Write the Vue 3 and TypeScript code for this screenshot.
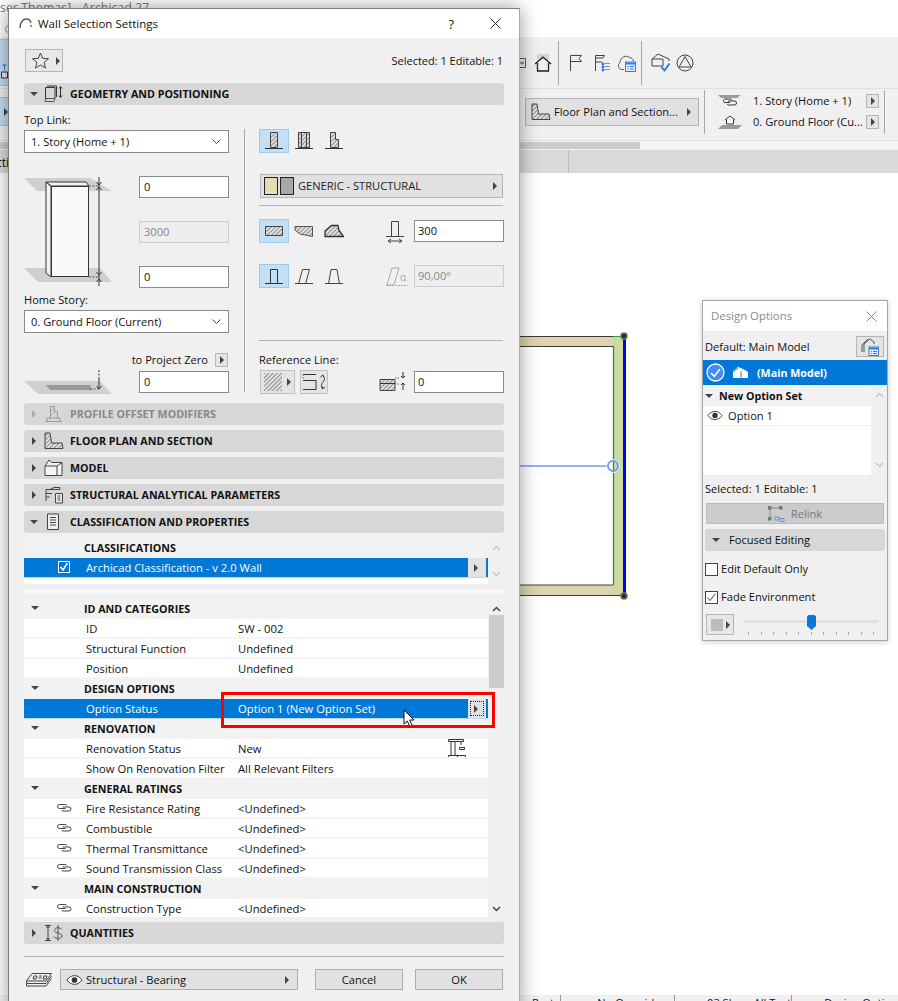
<script setup lang="ts">
interface Section {
  title: string
  icon: string
  open?: boolean
  disabled?: boolean
}

interface PropRow {
  kind: 'head' | 'row' | 'sel'
  name: string
  value?: string
  link?: boolean
}

const sections: Section[] = [
  { title: 'PROFILE OFFSET MODIFIERS', icon: 'i-profile', disabled: true },
  { title: 'FLOOR PLAN AND SECTION', icon: 'i-floor' },
  { title: 'MODEL', icon: 'i-model' },
  { title: 'STRUCTURAL ANALYTICAL PARAMETERS', icon: 'i-struct' },
  { title: 'CLASSIFICATION AND PROPERTIES', icon: 'i-class', open: true },
]

const U = '<Undefined>'
const props: PropRow[] = [
  { kind: 'head', name: 'ID AND CATEGORIES' },
  { kind: 'row', name: 'ID', value: 'SW - 002' },
  { kind: 'row', name: 'Structural Function', value: 'Undefined' },
  { kind: 'row', name: 'Position', value: 'Undefined' },
  { kind: 'head', name: 'DESIGN OPTIONS' },
  { kind: 'sel', name: 'Option Status', value: 'Option 1 (New Option Set)' },
  { kind: 'head', name: 'RENOVATION' },
  { kind: 'row', name: 'Renovation Status', value: 'New' },
  { kind: 'row', name: 'Show On Renovation Filter', value: 'All Relevant Filters' },
  { kind: 'head', name: 'GENERAL RATINGS' },
  { kind: 'row', name: 'Fire Resistance Rating', value: U, link: true },
  { kind: 'row', name: 'Combustible', value: U, link: true },
  { kind: 'row', name: 'Thermal Transmittance', value: U, link: true },
  { kind: 'row', name: 'Sound Transmission Class', value: U, link: true },
  { kind: 'head', name: 'MAIN CONSTRUCTION' },
  { kind: 'row', name: 'Construction Type', value: U, link: true },
]

const ticks = Array.from({ length: 11 }, (_, i) => i)
</script>

<template>
  <div class="desktop">
    <svg class="defs" width="0" height="0">
      <defs>
        <pattern id="hatch" width="3" height="3" patternUnits="userSpaceOnUse" patternTransform="rotate(45)">
          <rect width="3" height="3" fill="#dfe1e3" />
          <line x1="0" y1="0" x2="0" y2="3" stroke="#5f5f5f" stroke-width="1.300" />
        </pattern>
        <symbol id="i-link" viewBox="0 0 15 8">
          <path d="M8.500 4.500H2.500a2 2 0 0 1 0-4h6a2 2 0 0 1 1.500 1" fill="none" stroke="#444" />
          <path d="M5.500 3h6.500a2 2 0 0 1 0 4H6a2 2 0 0 1-1.500-1" fill="none" stroke="#444" />
        </symbol>
        <symbol id="i-eye" viewBox="0 0 18 12">
          <path d="M1 6c2.200-3 5-4.600 8-4.600S14.800 3 17 6c-2.200 3-5 4.600-8 4.600S3.200 9 1 6z" fill="#fff" stroke="#333" />
          <circle cx="9" cy="6" r="3" fill="#333" />
        </symbol>
        <symbol id="i-geom" viewBox="0 0 20 18">
          <path d="M1.500 2.500h9.500v11H1.500zM3 1h9.500v11" fill="none" stroke="#333" />
          <path d="M1 15.500l2-2h8l-1 3H1z" fill="none" stroke="#555" />
          <path d="M16.500 2v10M15 3.500l1.500-2 1.500 2M15 10.500l1.500 2 1.500-2" fill="none" stroke="#333" />
        </symbol>
        <symbol id="i-profile" viewBox="0 0 20 18">
          <path d="M6.500 14V1.500h4V7h3v7M1 16.500h17M3 16.500V13h13v3.500" fill="none" stroke="#999" />
          <path d="M7 2h3v11H7z" fill="url(#hatch)" opacity=".5" />
        </symbol>
        <symbol id="i-floor" viewBox="0 0 20 18">
          <path d="M1 1h5l1.500 10H18l1 5.500H1z" fill="url(#hatch)" stroke="#444" />
        </symbol>
        <symbol id="i-model" viewBox="0 0 20 18">
          <path d="M1 7v9.500h17V3.500H7.500L5 1 1 7h12l5-3.500M13 7v9.500" fill="#f4f4f4" stroke="#444" />
        </symbol>
        <symbol id="i-struct" viewBox="0 0 20 18">
          <path d="M2 15V3.500h14V1.500M2 7.500h6M6 3.500l4-2h6M2 11h4" fill="none" stroke="#444" />
          <path d="M11.500 7.500h7v9.500h-7z" fill="#e8e8e8" stroke="#444" />
          <path d="M13.500 10h3M13.500 12h3M13.500 14h3" stroke="#555" />
        </symbol>
        <symbol id="i-class" viewBox="0 0 20 18">
          <path d="M3.500 1h11v15.500h-11z" fill="#eee" stroke="#444" />
          <path d="M6 4.500h6M6 7h6M6 9.500h6M6 12h6" stroke="#444" />
        </symbol>
        <symbol id="i-money" viewBox="0 0 20 18">
          <path d="M1 1.500h6M1 16.500h6M4 2v14M2.500 4L4 2l1.500 2M2.500 14L4 16l1.500-2" fill="none" stroke="#444" />
          <path d="M17.500 5.500c-1-2.500-7-2.500-7 .8 0 3.700 7.500 2 7.500 5.700 0 3.200-7 3.200-8 .5M14 1v16" fill="none" stroke="#555" />
        </symbol>
      </defs>
    </svg>

    <div class="app-title">
      <span>ser Thomas] - Archicad 27</span>
      <svg class="app-arc" width="3" height="8" viewBox="0 0 3 8"><path d="M3 .5C1 1 .5 3 .5 4S1 7 3 7.500" fill="none" stroke="#999" /></svg>
    </div>

    <div class="tb-row tb-first">
      <div class="sliver sliver-tall">
        <svg width="8" height="16" viewBox="0 0 8 16">
          <path d="M4.500 7V1M2.500 3l2-2 2 2" fill="none" stroke="#2f7fe8" />
          <path d="M1.500 9h6v6h-6z" fill="#dbe8f4" stroke="#333" />
        </svg>
      </div>
      <div class="tb-group tb-group-first">
        <svg class="part" width="6" height="10" viewBox="0 0 6 10"><path d="M0 .5h5.500v9H0M0 5h3.500M2 3.500l1.500 1.500L2 6.500" fill="none" stroke="#555" /></svg>
        <span class="home">
          <svg width="18" height="17" viewBox="0 0 18 17"><path d="M1 9l8-7 8 7M3.500 8v8h11V8" fill="none" stroke="#222" stroke-width="1.300" /></svg>
        </span>
        <span class="tb-div"></span>
        <svg class="ti t-flag" width="14" height="18" viewBox="0 0 14 18"><path d="M1.500 17V1.500h11l-2.500 3 2.500 3h-11" fill="none" stroke="#444" /></svg>
        <svg class="ti t-list" width="17" height="18" viewBox="0 0 17 18">
          <path d="M1.500 17V1.500h9L9 4H2M2 8h6" fill="none" stroke="#444" />
          <path d="M8 9h2v2H8zM8 12h2v2H8zM8 15h2v2H8zM11 9.500h5M11 12.500h5M11 15.500h5" fill="#2f7fe8" stroke="#2f7fe8" stroke-width=".8" />
        </svg>
        <svg class="ti t-cloud" width="19" height="20" viewBox="0 0 19 20">
          <path d="M7 16.500H4.500C1 16 .5 11 3 9.500 3.500 4 9 1.500 12.500 4.500c2 .2 3.500 1.500 4 3.500" fill="none" stroke="#555" />
          <rect x="8.500" y="9" width="10" height="9.500" fill="#e8f0fb" stroke="#2f7fe8" />
          <path d="M8.500 10.500h10" stroke="#2f7fe8" stroke-width="2" />
          <path d="M10.500 13.500h1.500M13 13.500h4M10.500 16h1.500M13 16h4" stroke="#2f7fe8" />
        </svg>
        <span class="tb-div tb-div-2"></span>
        <svg class="ti t-house" width="19" height="20" viewBox="0 0 19 20">
          <path d="M1 13V6l6-5 11 5v2M1 6h11v7H1" fill="none" stroke="#444" />
          <path d="M10.500 14l3 3.500 5-7" fill="none" stroke="#2f7fe8" stroke-width="2" />
        </svg>
        <svg width="18" height="18" viewBox="0 0 18 18">
          <circle cx="9" cy="9" r="8" fill="none" stroke="#444" />
          <path d="M9 2.500L15 13H3z" fill="none" stroke="#444" />
        </svg>
      </div>
    </div>

    <div class="tb-row tb-second">
      <div class="sliver sliver-short"><i class="tri-r"></i></div>
      <div class="fp-btn">
        <svg width="20" height="18" viewBox="0 0 20 18"><use href="#i-floor" /></svg>
        <span>Floor Plan and Section...</span>
        <i class="tri-r"></i>
      </div>
      <span class="tb-div tb-div-3"></span>
      <div class="story">
        <div class="story-row">
          <svg width="24" height="12" viewBox="0 0 24 12">
            <path d="M0 0h23l-4 3H3z" fill="#9a9a9a" />
            <path d="M12 7.500H6.500a2 2 0 0 1 0-3.500h6a2 2 0 0 1 1.500 1" fill="none" stroke="#333" />
            <path d="M10 6h6.500a2 2 0 0 1 0 4h-6a2 2 0 0 1-1.500-1" fill="none" stroke="#333" />
          </svg>
          <span class="story-text">1. Story (Home + 1)</span>
          <span class="mini"><i class="tri-r"></i></span>
        </div>
        <div class="story-row">
          <svg width="24" height="14" viewBox="0 0 24 14">
            <path d="M0 14l4-4h20l-4 4z" fill="#9a9a9a" />
            <path d="M7 5l5-4 5 4M8.500 4.500V9h7V4.500" fill="#fff" stroke="#333" />
          </svg>
          <span class="story-text">0. Ground Floor (Cu...</span>
          <span class="mini"><i class="tri-r"></i></span>
        </div>
      </div>
      <span class="tb-div tb-div-4"></span>
    </div>

    <div class="scroll-strip"><span class="scroll-thumb"></span></div>
    <div class="tabs">
      <span class="tab-clip">cti</span>
      <span class="tab-div"></span>
    </div>

    <div class="canvas">
      <svg class="plan" width="898" height="822" viewBox="0 173 898 822">
        <rect x="500" y="336" width="113" height="11" fill="#dcd4b0" />
        <rect x="500" y="585" width="113" height="11" fill="#dcd4b0" />
        <rect x="613" y="336" width="10" height="260" fill="#ccd9a2" />
        <path d="M500 346.500h113M500 585h113M500 595.500h123" stroke="#3c3c30" fill="none" />
        <path d="M500 336.500h113" stroke="#3c3c30" />
        <path d="M613 336.500h10" stroke="#31a531" />
        <path d="M613.500 346v239" stroke="#0f9a0f" stroke-width="1.200" />
        <path d="M500 466h108" stroke="#fff" stroke-width="3" opacity=".7" />
        <path d="M500 466h108" stroke="#6f9cf2" stroke-width="1.500" />
        <circle cx="613" cy="466" r="6.500" fill="none" stroke="#fff" stroke-width="1" opacity=".8" />
        <circle cx="613" cy="466" r="5" fill="none" stroke="#6f9cf2" stroke-width="2" />
        <path d="M624.500 336v260" stroke="#0000ee" stroke-width="3" />
        <circle cx="624" cy="336" r="3" fill="#1c1ca0" stroke="#7d7d12" stroke-width="1.500" />
        <circle cx="624" cy="596" r="3" fill="#1c1ca0" stroke="#7d7d12" stroke-width="1.500" />
      </svg>
    </div>

    <div class="statusbar">
      <span class="st-text st-a">Paste</span>
      <span class="st-div"></span>
      <span class="st-text st-b">No Overrides</span>
      <span class="st-div"></span>
      <span class="st-text st-c">03 Show All Text</span>
      <span class="st-div"></span>
      <span class="st-text st-d">Design Option</span>
    </div>

    <!-- main dialog -->
    <section class="dialog">
      <header class="titlebar">
        <svg class="arc" width="13" height="13" viewBox="0 0 13 13"><path d="M1 11C1 5 4 2 7.500 2c2.500 0 4 1.500 4.500 4M12 8v2" fill="none" stroke="#555" stroke-width="1.300" /></svg>
        <span class="title-text">Wall Selection Settings</span>
        <span class="help">?</span>
        <svg class="close" width="11" height="11" viewBox="0 0 11 11"><path d="M.5.500l10 10M10.500.500l-10 10" stroke="#222" /></svg>
      </header>

      <div class="dlg-body">
        <div class="fav-row">
          <div class="fav-btn">
            <svg width="17" height="17" viewBox="0 0 17 17"><path d="M8.500 1l2.200 5.300 5.800.4-4.400 3.700 1.400 5.600-5-3-5 3 1.400-5.600L.5 6.700l5.800-.4z" fill="none" stroke="#444" /></svg>
            <i class="tri-r"></i>
          </div>
          <span class="sel-count">Selected: 1 Editable: 1</span>
        </div>

        <div class="sec-head first">
          <i class="tri-d"></i>
          <svg class="sec-icon" width="20" height="18"><use href="#i-geom" /></svg>
          <span>GEOMETRY AND POSITIONING</span>
        </div>

        <div class="geo">
          <div class="geo-left">
            <label class="lbl">Top Link:</label>
            <div class="select">
              <span>1. Story (Home + 1)</span>
              <svg width="9" height="5" viewBox="0 0 9 5"><path d="M.5.500l4 4 4-4" fill="none" stroke="#444" /></svg>
            </div>
            <div class="wall-row">
              <svg width="90" height="112" viewBox="0 0 90 112">
                <path d="M0 2h66l22 13H13zM0 92h76l12 14H14z" fill="#cfcfcf" />
                <path d="M22 6h40l3 4H27zM22 6v91l5 4V10z" fill="#f2f4f4" stroke="#333" />
                <path d="M27.500 10.500h37v90h-37z" fill="#f9f9f9" stroke="#333" />
                <path d="M75 1v109" stroke="#333" />
                <path d="M65 10h10M65 101h10" stroke="#555" stroke-dasharray="2 1.500" />
                <path d="M72.500 6l2.500 3 2.500-3M72.500 14l2.500-3 2.500 3M72.500 96l2.500 3 2.500-3M72.500 106l2.500-3 2.500 3" fill="none" stroke="#333" />
              </svg>
              <div class="wall-inputs">
                <div class="field">0</div>
                <div class="field off">3000</div>
                <div class="field">0</div>
              </div>
            </div>
            <label class="lbl home-lbl">Home Story:</label>
            <div class="select">
              <span>0. Ground Floor (Current)</span>
              <svg width="9" height="5" viewBox="0 0 9 5"><path d="M.5.500l4 4 4-4" fill="none" stroke="#444" /></svg>
            </div>
            <div class="zero-row">
              <svg width="90" height="26" viewBox="0 0 90 26">
                <path d="M0 12h76l12 13H14z" fill="#cfcfcf" />
                <path d="M22 16h44l2 5H26z" fill="#999" />
                <path d="M75 1v8" stroke="#333" stroke-dasharray="2 1.500" />
                <path d="M75 9v11M72.500 17l2.500 3 2.500-3" fill="none" stroke="#333" />
                <path d="M66 20h9" stroke="#555" stroke-dasharray="2 1.500" />
              </svg>
              <div class="zero-col">
                <div class="zero-lbl">
                  <span>to Project Zero</span>
                  <span class="mini"><i class="tri-r"></i></span>
                </div>
                <div class="field">0</div>
              </div>
            </div>
          </div>

          <div class="geo-div"></div>

          <div class="geo-right">
            <div class="icon-row top">
              <span class="ibtn on">
                <svg width="20" height="20" viewBox="0 0 20 20"><path d="M6.500 1.500h7v15h-7z" fill="url(#hatch)" stroke="#444" /><path d="M1 17.500h18" stroke="#333" /></svg>
              </span>
              <span class="ibtn">
                <svg width="20" height="20" viewBox="0 0 20 20"><path d="M4.500 1.500h11v15h-11zM7.500 1.500h5v15h-5z" fill="url(#hatch)" stroke="#444" /><path d="M1 17.500h18" stroke="#333" /></svg>
              </span>
              <span class="ibtn">
                <svg width="20" height="20" viewBox="0 0 20 20"><path d="M6.500 16.500V1.500h5v7h3v8z" fill="url(#hatch)" stroke="#444" /><path d="M1 17.500h18" stroke="#333" /></svg>
              </span>
            </div>

            <div class="material">
              <span class="swatch dots"></span>
              <span class="swatch grey"></span>
              <span class="mat-name">GENERIC - STRUCTURAL</span>
              <i class="tri-r"></i>
            </div>
            <div class="rule rule-a"></div>

            <div class="icon-row second">
              <span class="ibtn on">
                <svg width="20" height="12" viewBox="0 0 20 12"><path d="M1.500 1.500h17v9h-17z" fill="url(#hatch)" stroke="#444" /></svg>
              </span>
              <span class="ibtn">
                <svg width="20" height="12" viewBox="0 0 20 12"><path d="M1 1.500h17.500v10L6 9 1 5z" fill="url(#hatch)" stroke="#555" /></svg>
              </span>
              <span class="ibtn">
                <svg width="20" height="14" viewBox="0 0 20 14"><path d="M1 12.500V7l6.500-5.500H14l1 5 4.500 6z" fill="url(#hatch)" stroke="#333" stroke-width="1.300" /></svg>
              </span>
              <div class="dim-group">
                <svg width="20" height="24" viewBox="0 0 20 24"><path d="M6.500 17V2.500h7V17M1 17.500h18M3 22h14M3 22l3-2M3 22l3 2M17 22l-3-2M17 22l-3 2" fill="none" stroke="#444" /></svg>
                <div class="field short">300</div>
              </div>
            </div>

            <div class="icon-row third">
              <span class="ibtn on">
                <svg width="20" height="20" viewBox="0 0 20 20"><path d="M6.500 18V3.500h7V18M1 17.500h18" fill="none" stroke="#333" /></svg>
              </span>
              <span class="ibtn">
                <svg width="20" height="20" viewBox="0 0 20 20"><path d="M4.500 18L8.500 3.500h7L11.500 18M1 17.500h18" fill="none" stroke="#444" /></svg>
              </span>
              <span class="ibtn">
                <svg width="20" height="20" viewBox="0 0 20 20"><path d="M4.500 18L7 3.500h6L15.500 18M1 17.500h18" fill="none" stroke="#444" /></svg>
              </span>
              <div class="dim-group">
                <svg width="24" height="22" viewBox="0 0 24 22">
                  <path d="M2 20l5-17h7l-5 17z" fill="none" stroke="#aaa" />
                  <path d="M1 20.500h22" stroke="#aaa" stroke-dasharray="2 1" />
                  <text x="15" y="16" class="alpha">α</text>
                </svg>
                <div class="field short off">90,00°</div>
              </div>
            </div>

            <div class="rule rule-b"></div>
            <label class="lbl ref-lbl">Reference Line:</label>
            <div class="ref-row">
              <span class="ref-btn wide">
                <svg width="18" height="18" viewBox="0 0 18 18"><rect width="18" height="18" fill="url(#hatch)" /></svg>
                <i class="tri-r"></i>
              </span>
              <span class="ref-btn narrow">
                <svg width="24" height="18" viewBox="0 0 24 18">
                  <path d="M1 1.500h13M1 16.500h13M1 7.500h13v9" fill="none" stroke="#333" />
                  <path d="M1 1.500v4" stroke="#777" stroke-dasharray="1.500 1" />
                  <path d="M21 3c2 2 2 4 0 6M21 15c-2-2-2-4 0-6M18.500 4l2.500-2 1 2.500M23 14l-2.500 2-1-2.500" fill="none" stroke="#333" />
                </svg>
              </span>
              <div class="dim-group">
                <svg width="28" height="20" viewBox="0 0 28 20">
                  <path d="M1 7.500h15v11H1z" fill="url(#hatch)" stroke="#444" />
                  <path d="M1 11.500h15" stroke="#333" />
                  <path d="M16 6h5M16 12h5" stroke="#777" stroke-dasharray="1.500 1" />
                  <path d="M24 0v6M22 4l2 2 2-2M24 11v7M22 13l2-2 2 2" fill="none" stroke="#333" />
                </svg>
                <div class="field short">0</div>
              </div>
            </div>
          </div>
        </div>

        <div v-for="s in sections" :key="s.title" class="sec-head" :class="{ dis: s.disabled }">
          <i :class="s.open ? 'tri-d' : 'tri-r'"></i>
          <svg class="sec-icon" width="20" height="18"><use :href="'#' + s.icon" /></svg>
          <span>{{ s.title }}</span>
        </div>

        <div class="class-list">
          <div class="class-rows">
            <div class="prop head"><span class="hd-name">CLASSIFICATIONS</span></div>
            <div class="prop sel">
              <span class="chk"><svg width="10" height="10" viewBox="0 0 10 10"><path d="M1.500 5l2.500 3L8.500 1" fill="none" stroke="#fff" stroke-width="1.500" /></svg></span>
              <span class="p-name">Archicad Classification - v 2.0 Wall</span>
              <span class="sel-btn"><i class="tri-r"></i></span>
            </div>
          </div>
          <div class="vscroll faint">
            <svg width="9" height="6" viewBox="0 0 9 6"><path d="M1 5l3.500-3.500L8 5" fill="none" stroke="#c8c8c8" stroke-width="1.500" /></svg>
            <svg width="9" height="6" viewBox="0 0 9 6"><path d="M1 1l3.500 3.500L8 1" fill="none" stroke="#c8c8c8" stroke-width="1.500" /></svg>
          </div>
        </div>
        <div class="strip"></div>

        <div class="prop-list">
          <div class="prop-rows">
            <div v-for="p in props" :key="p.name" class="prop" :class="p.kind">
              <template v-if="p.kind === 'head'">
                <i class="tri-d tri-prop"></i>
                <span class="hd-name">{{ p.name }}</span>
              </template>
              <template v-else>
                <svg v-if="p.link" class="link" width="15" height="8"><use href="#i-link" /></svg>
                <span class="p-name">{{ p.name }}</span>
                <span class="p-val">{{ p.value }}</span>
                <span v-if="p.kind === 'sel'" class="sel-btn dotted"><i class="tri-r"></i></span>
                <svg v-if="p.name === 'Renovation Status'" class="reno" width="19" height="19" viewBox="0 0 19 19">
                  <path d="M.5.500h15v2H.5zM13 2.500V6M11.500 8.500h5v2h-5zM9.500 16.500h8v2h-8zM.5 16.500h9v2h-9zM3 2.500v14M7 2.500v14" fill="none" stroke="#333" />
                </svg>
              </template>
            </div>
          </div>
          <div class="vscroll">
            <svg class="up" width="9" height="6" viewBox="0 0 9 6"><path d="M1 5l3.500-3.500L8 5" fill="none" stroke="#444" stroke-width="1.500" /></svg>
            <span class="thumb"></span>
            <svg class="down" width="9" height="6" viewBox="0 0 9 6"><path d="M1 1l3.500 3.500L8 1" fill="none" stroke="#444" stroke-width="1.500" /></svg>
          </div>
        </div>

        <div class="sec-head quant">
          <i class="tri-r"></i>
          <svg class="sec-icon" width="20" height="18"><use href="#i-money" /></svg>
          <span>QUANTITIES</span>
        </div>
        <div class="rule rule-foot"></div>

        <footer class="footer">
          <svg class="layers" width="26" height="16" viewBox="0 0 26 16">
            <path d="M.5 9L6 1.500h19.500L20 9z" fill="#eee" stroke="#444" />
            <path d="M.5 9v2.500h19.500l5.500-7.500M.5 11.500V14h19.500l5.500-7.500" fill="none" stroke="#444" />
            <path d="M8 4h3l-1 3H7zM13 4h3M12.500 6h3M18 4h3l-1 3h-3z" fill="none" stroke="#444" />
          </svg>
          <div class="btn layer-sel">
            <svg width="17" height="12"><use href="#i-eye" /></svg>
            <span>Structural - Bearing</span>
            <i class="tri-r"></i>
          </div>
          <div class="btn cancel">Cancel</div>
          <div class="btn ok">OK</div>
        </footer>
      </div>
    </section>

    <!-- highlight put on the shot -->
    <div class="red-box"></div>
    <svg class="cursor" width="13" height="19" viewBox="0 0 13 19">
      <path d="M1 1v14l3.300-3 2.500 5.500 2.400-1-2.500-5.500H11z" fill="#fff" stroke="#111" />
    </svg>

    <!-- palette -->
    <section class="palette">
      <header class="pal-title">
        <span>Design Options</span>
        <svg width="11" height="11" viewBox="0 0 11 11"><path d="M.5.500l10 10M10.500.500l-10 10" stroke="#888" /></svg>
      </header>
      <div class="pal-default">
        <span>Default: Main Model</span>
        <span class="pal-btn">
          <svg width="18" height="19" viewBox="0 0 18 19">
            <path d="M3 15V7l6-5 4 3v2M1 15V8l6-6" fill="none" stroke="#555" />
            <rect x="8" y="10" width="9.500" height="8.500" fill="#e8f0fb" stroke="#2f7fe8" />
            <path d="M8 11.500h9.500" stroke="#2f7fe8" stroke-width="2" />
            <path d="M10 14.500h1M12 14.500h4M10 16.500h1M12 16.500h4" stroke="#2f7fe8" />
          </svg>
        </span>
      </div>
      <div class="pal-main">
        <svg width="19" height="19" viewBox="0 0 19 19">
          <circle cx="9.500" cy="9.500" r="8.500" fill="#3f8ef5" stroke="#fff" stroke-width="1.300" />
          <path d="M5 10l3.300 3.300L14 6" fill="none" stroke="#fff" stroke-width="1.500" />
        </svg>
        <svg class="pal-house" width="15" height="11" viewBox="0 0 15 11">
          <path d="M.5 10.500V4L5 .5 9 2l5.500 3v5.500zM8 4v6.500" fill="#fff" stroke="#fff" />
          <path d="M8 4.500v6M.5 4.500L5 1" stroke="#0078d7" />
        </svg>
        <span>(Main Model)</span>
      </div>
      <div class="pal-list">
        <div class="pal-rows">
          <div class="pal-head"><i class="tri-d"></i><span>New Option Set</span></div>
          <div class="pal-opt">
            <svg width="16" height="11"><use href="#i-eye" /></svg>
            <span>Option 1</span>
          </div>
        </div>
        <div class="vscroll faint pal-scroll">
          <svg width="9" height="6" viewBox="0 0 9 6"><path d="M1 5l3.500-3.500L8 5" fill="none" stroke="#c8c8c8" stroke-width="1.500" /></svg>
          <svg width="9" height="6" viewBox="0 0 9 6"><path d="M1 1l3.500 3.500L8 1" fill="none" stroke="#c8c8c8" stroke-width="1.500" /></svg>
        </div>
      </div>
      <div class="pal-count">Selected: 1 Editable: 1</div>
      <div class="relink">
        <svg width="17" height="16" viewBox="0 0 17 16">
          <path d="M2 2h11M2 2v11" stroke="#888" fill="none" />
          <rect x="0" y="0" width="3.500" height="3.500" fill="#777" />
          <rect x="11" y="0" width="3.500" height="3.500" fill="#777" />
          <rect x="0" y="11" width="3.500" height="3.500" fill="#777" />
          <path d="M7 11h4v3H7zM11 12.500h5v3h-4z" fill="none" stroke="#6f93c9" />
        </svg>
        <span>Relink</span>
      </div>
      <div class="pal-section"><i class="tri-d"></i><span>Focused Editing</span></div>
      <div class="pal-check first-check"><span class="box"></span><span>Edit Default Only</span></div>
      <div class="pal-check"><span class="box"><svg width="11" height="11" viewBox="0 0 11 11"><path d="M1.500 5.500l2.500 3L9.500 1.500" fill="none" stroke="#444" /></svg></span><span>Fade Environment</span></div>
      <div class="pal-slider">
        <span class="fade-btn"><span class="fade-sq"></span><i class="tri-r"></i></span>
        <div class="slider">
          <div class="track"></div>
          <svg class="knob" width="9" height="15" viewBox="0 0 9 15"><path d="M0 1.500L1.500 0h6L9 1.500V11l-4.500 4L0 11z" fill="#0a78d6" /></svg>
          <div class="ticks"><span v-for="t in ticks" :key="t" class="tick"></span></div>
        </div>
      </div>
    </section>
  </div>
</template>

<style scoped>
.desktop {
  position: relative;
  display: flex;
  flex-direction: column;
  width: 898px;
  height: 1001px;
  overflow: hidden;
  background: #fff;
  color: #111;
  font: 11.1px/14px "Open Sans", "Liberation Sans", sans-serif;
}
.defs {
  position: absolute;
}
svg {
  display: block;
  flex: none;
}
.tri-r,
.tri-d {
  display: inline-block;
  flex: none;
  width: 0;
  height: 0;
}
.tri-r {
  border-left: 4px solid #444;
  border-top: 4px solid transparent;
  border-bottom: 4px solid transparent;
}
.tri-d {
  border-top: 4px solid #444;
  border-left: 4px solid transparent;
  border-right: 4px solid transparent;
}

/* app behind the windows */
.app-title {
  flex: none;
  height: 37px;
  padding-top: 1px;
  box-sizing: border-box;
  font-size: 12px;
  line-height: 14px;
  color: #777;
  white-space: nowrap;
  letter-spacing: .2px;
}
.app-arc { margin: 10px 0 0 5px; }
.tb-row {
  display: flex;
  flex: none;
  align-items: center;
  height: 52px;
  background: #f0f0f0;
  border-bottom: 1px solid #e0e0e0;
  box-sizing: border-box;
}
.tb-second { padding-bottom: 6px; }
.sliver {
  display: flex;
  flex: none;
  align-items: center;
  width: 8px;
  background: #c4dcf2;
  border: solid #9ccbee;
  border-width: 1px 0;
  box-sizing: border-box;
}
.sliver-tall { height: 47px; padding-top: 16px; }
.sliver-short { height: 29px; justify-content: flex-end; }
.tb-group {
  display: flex;
  align-items: center;
}
.tb-group-first {
  margin-left: 512px;
}
.part { margin-right: 8px; }
.home {
  display: block;
  flex: none;
  padding-top: 1px;
  background: linear-gradient(#d4d4d4, #d4d4d4) no-repeat 3px 0 / 12px 6px;
}
.tb-div {
  display: block;
  flex: none;
  width: 1px;
  height: 44px;
  background: #a8a8a8;
  margin: 0 10px 0 6px;
}
.t-flag { margin-right: 11px; }
.t-list { margin-right: 6px; }
.tb-div-2 { margin: 0 9px 0 5px; }
.t-house { margin-right: 6px; }
.fp-btn {
  display: flex;
  align-items: center;
  width: 174px;
  height: 28px;
  margin-left: 517px;
  padding: 0 5px;
  gap: 3px;
  box-sizing: border-box;
  background: #e1e1e1;
  border: 1px solid #b5b5b5;
  white-space: nowrap;
}
.fp-btn .tri-r { margin-left: auto; margin-right: 2px; }
.tb-div-3 { margin: 0 13px 0 5px; }
.story {
  display: flex;
  flex-direction: column;
  gap: 7px;
  width: 166px;
}
.story-row {
  display: flex;
  align-items: center;
  height: 14px;
  white-space: nowrap;
}
.story-text { margin-left: 11px; }
.story-row .mini { margin-left: auto; margin-right: 5px; }
.tb-div-4 { margin: 0; }
.mini {
  display: flex;
  flex: none;
  align-items: center;
  justify-content: center;
  width: 13px;
  height: 14px;
  box-sizing: border-box;
  background: #e4e4e4;
  border: 1px solid #b5b5b5;
}
.scroll-strip {
  flex: none;
  height: 9px;
  padding-top: 1px;
  background: #f4f4f4;
  box-sizing: border-box;
}
.scroll-thumb {
  display: block;
  width: 640px;
  height: 7px;
  background: #ccc;
}
.tabs {
  position: relative;
  display: flex;
  flex: none;
  height: 23px;
  background: #d9d9d9;
  line-height: 26px;
  font-size: 12px;
}
.tab-clip { margin-left: -4px; }
.tab-div {
  width: 1px;
  margin-left: 559px;
  background: #bdbdbd;
}
.canvas {
  position: relative;
  flex: 1;
  background: #fff;
}
.plan {
  position: absolute;
  left: 0;
  top: 0;
}
.statusbar {
  display: flex;
  flex: none;
  align-items: flex-start;
  height: 6px;
  background: #f0f0f0;
  overflow: hidden;
  padding-left: 532px;
}
.st-text {
  margin-top: 1px;
  white-space: nowrap;
}
.st-a { width: 30px; }
.st-b { width: 121px; padding-left: 36px; box-sizing: border-box; }
.st-c { width: 121px; padding-left: 32px; box-sizing: border-box; }
.st-d { padding-left: 32px; }
.st-div {
  flex: none;
  width: 1px;
  height: 6px;
  background: #999;
}

/* dialog */
.dialog {
  position: absolute;
  left: 8px;
  top: 8px;
  width: 512px;
  height: 1000px;
  box-sizing: border-box;
  background: #f0f0f0;
  border: 1px solid #7f7f7f;
  border-right-color: #aaa;
  box-shadow: 0 0 18px rgba(0, 0, 0, .4);
}
.titlebar {
  display: flex;
  align-items: center;
  height: 29px;
  padding-left: 10px;
  background: #fff;
}
.arc { margin-right: 6px; }
.title-text { font-size: 11.5px; }
.help {
  margin-left: auto;
  font-size: 13px;
}
.close { margin: 0 18px 0 36px; }
.dlg-body {
  display: flex;
  flex-direction: column;
  padding: 0 15px;
}
.fav-row {
  display: flex;
  align-items: center;
  justify-content: space-between;
  height: 23px;
  margin-top: 11px;
}
.fav-btn {
  display: flex;
  align-items: center;
  width: 38px;
  height: 23px;
  margin-left: 1px;
  padding-left: 6px;
  gap: 7px;
  box-sizing: border-box;
  background: #e8e8e8;
  border: 1px solid #b5b5b5;
}
.sel-count {
  margin-top: 1px;
  margin-right: 1px;
  font-size: 11px;
}
.sec-head {
  display: flex;
  flex: none;
  align-items: center;
  height: 22px;
  margin-bottom: 5px;
  padding-left: 6px;
  box-sizing: border-box;
  background: #d7d7d7;
  border-radius: 3px;
  font-weight: 700;
  font-size: 10.7px;
}
.sec-head .tri-r { margin-left: 2px; margin-right: 6px; }
.sec-head .tri-d { margin-right: 4px; margin-left: 0; }
.sec-head.first { margin-top: 11px; margin-bottom: 0; }
.sec-icon { margin-left: 2px; margin-right: 6px; }
.sec-head.dis { color: #888; }
.sec-head.dis .tri-r { border-left-color: #aaa; }
.quant { margin-top: 5px; margin-bottom: 0; }

.geo {
  display: flex;
  height: 293px;
  margin-bottom: 5px;
}
.geo-left {
  display: flex;
  flex: none;
  flex-direction: column;
  width: 205px;
  padding-top: 8px;
  box-sizing: border-box;
}
.lbl {
  display: block;
  height: 17px;
  white-space: nowrap;
}
.select {
  display: flex;
  flex: none;
  align-items: center;
  justify-content: space-between;
  height: 23px;
  padding: 0 7px 0 6px;
  box-sizing: border-box;
  background: #fff;
  border: 1px solid #8a8a8a;
}
.wall-row {
  display: flex;
  justify-content: space-between;
  margin-top: 23px;
}
.wall-inputs {
  display: flex;
  flex-direction: column;
  gap: 23px;
  width: 90px;
}
.field {
  width: 90px;
  height: 22px;
  padding-left: 3px;
  box-sizing: border-box;
  background: #fff;
  border: 1px solid #8a8a8a;
  line-height: 20px;
}
.wall-inputs .field,
.zero-col .field { padding-left: 4px; }
.field.off {
  background: #eee;
  border-color: #ccc;
  color: #888;
}
.home-lbl { margin-top: 5px; }
.zero-row {
  display: flex;
  align-items: flex-end;
  justify-content: space-between;
  margin-top: 20px;
}
.zero-row > svg { margin-bottom: -2px; }
.zero-col {
  display: flex;
  flex-direction: column;
  gap: 4px;
  width: 90px;
}
.zero-lbl {
  display: flex;
  align-items: center;
  justify-content: flex-end;
  gap: 7px;
  height: 14px;
  white-space: nowrap;
}
.zero-lbl .mini { margin-right: 1px; }
.geo-div {
  flex: none;
  width: 1px;
  height: 263px;
  margin: 24px 14px 0 15px;
  background: #a8a8a8;
}
.geo-right {
  display: flex;
  flex: 1;
  flex-direction: column;
  padding-top: 24px;
}
.icon-row {
  display: flex;
  align-items: center;
  height: 24px;
}
.ibtn {
  display: flex;
  flex: none;
  align-items: center;
  justify-content: center;
  width: 30px;
  height: 24px;
  box-sizing: border-box;
}
.ibtn.on {
  background: #c2dff5;
  border: 1px solid #9ccbee;
}
.material {
  display: flex;
  align-items: center;
  height: 24px;
  margin: 21px 1px 0;
  padding: 0 5px 0 3px;
  box-sizing: border-box;
  background: #e1e1e1;
  border: 1px solid #b5b5b5;
}
.swatch {
  display: block;
  width: 14px;
  height: 18px;
  box-sizing: border-box;
  border: 1px solid #222;
}
.swatch.dots {
  margin-right: 2px;
  background: #e6dcb4 radial-gradient(#b3a778 .6px, transparent .7px) 0 0 / 2px 2px;
}
.swatch.grey { background: #a8a8a8; }
.mat-name {
  margin-left: 4px;
  color: #222;
}
.material .tri-r { margin-left: auto; }
.rule {
  flex: none;
  height: 1px;
  background: #b5b5b5;
}
.rule-a { margin: 7px 0 0 0; width: 244px; }
.second { margin-top: 13px; }
.third { margin-top: 21px; }
.dim-group {
  display: flex;
  align-items: center;
  justify-content: flex-end;
  margin-left: auto;
  gap: 7px;
}
.second .dim-group { gap: 9px; }
.third .dim-group { gap: 5px; }
.rule-b { margin-top: 52px; width: 244px; }
.ref-lbl { margin-top: 12px; }
.ref-row {
  display: flex;
  align-items: center;
  margin-top: 0;
  height: 24px;
}
.ref-btn {
  display: flex;
  flex: none;
  align-items: center;
  justify-content: center;
  height: 24px;
  box-sizing: border-box;
  background: #e4e4e4;
  border: 1px solid #c0c0c0;
}
.ref-btn.wide {
  width: 35px;
  margin-left: 1px;
  gap: 5px;
}
.ref-btn.narrow {
  width: 28px;
  margin-left: 5px;
}
.short { margin-top: 0; }

/* lists */
.class-list {
  display: flex;
  flex: none;
  height: 46px;
}
.class-rows {
  width: 464px;
  background: #fff;
}
.vscroll {
  position: relative;
  display: flex;
  flex: 1;
  flex-direction: column;
  align-items: center;
}
.vscroll.faint {
  justify-content: space-between;
  padding: 7px 0;
  box-sizing: border-box;
}
.strip {
  flex: none;
  height: 5px;
  margin-top: 5px;
  margin-bottom: 5px;
  background: #f8f8f8;
}
.prop-list {
  display: flex;
  flex: none;
  height: 318px;
  overflow: hidden;
}
.prop-rows {
  width: 464px;
  flex: none;
  background: #fff;
}
.prop {
  position: relative;
  display: block;
  height: 20px;
  box-sizing: border-box;
  font-size: 11.25px;
  line-height: 20px;
  white-space: nowrap;
  overflow: hidden;
}
.prop.head {
  background: #f2f2f2;
}
.prop.row {
  background: #fff;
  border-bottom: 2px solid #f4f4f4;
}
.prop.sel {
  background: #0078d7;
  color: #fff;
  border-bottom: 1px solid #bcd8ee;
}
.hd-name {
  position: absolute;
  left: 60px;
  top: 0;
  font-weight: 700;
  font-size: 10.7px;
  color: #111;
}
.tri-prop {
  position: absolute;
  left: 7px;
  top: 7px;
}
.p-name {
  position: absolute;
  left: 62px;
  top: 0;
}
.p-val {
  position: absolute;
  left: 214px;
  top: 0;
}
.link {
  position: absolute;
  left: 33px;
  top: 5px;
}
.chk {
  position: absolute;
  left: 34px;
  top: 3px;
  display: flex;
  align-items: center;
  justify-content: center;
  width: 12px;
  height: 12px;
  box-sizing: border-box;
  border: 1px solid #fff;
}
.sel-btn {
  position: absolute;
  right: 0;
  top: 0;
  display: flex;
  align-items: center;
  justify-content: center;
  width: 20px;
  height: 19px;
  padding-right: 2px;
  box-sizing: border-box;
  background: #e2e2e2;
  border-right: 2px solid #0078d7;
}
.sel-btn.dotted::before {
  content: "";
  position: absolute;
  left: 2px;
  top: 2px;
  width: 12px;
  height: 13px;
  border: 1px dotted #222;
}
.reno {
  position: absolute;
  left: 424px;
  top: 0;
}
.vscroll .up { margin-top: 7px; }
.thumb {
  display: block;
  width: 15px;
  height: 73px;
  margin-top: 3px;
  background: #cdcdcd;
}
.vscroll .down { margin-top: auto; margin-bottom: 5px; }
.rule-foot { margin-top: 12px; }
.footer {
  display: flex;
  align-items: center;
  height: 21px;
  margin-top: 12px;
}
.layers { margin-left: 2px; margin-right: 8px; }
.btn {
  display: flex;
  align-items: center;
  justify-content: center;
  flex: none;
  height: 21px;
  box-sizing: border-box;
  background: #e1e1e1;
  border: 1px solid #adadad;
}
.layer-sel {
  justify-content: flex-start;
  width: 238px;
  padding: 0 8px 0 5px;
  gap: 3px;
}
.layer-sel .tri-r { margin-left: auto; }
.cancel { width: 88px; margin-left: 17px; }
.ok { width: 88px; margin-left: 12px; }

.red-box {
  position: absolute;
  left: 221px;
  top: 692px;
  width: 274px;
  height: 36px;
  box-sizing: border-box;
  border: 3px solid #f00;
}
.cursor {
  position: absolute;
  left: 403px;
  top: 709px;
}

/* design options palette */
.palette {
  position: absolute;
  left: 702px;
  top: 300px;
  width: 186px;
  height: 341px;
  box-sizing: border-box;
  background: #f0f0f0;
  border: 1px solid #a6a6a6;
  box-shadow: 0 1px 6px rgba(0, 0, 0, .2);
}
.pal-title {
  display: flex;
  align-items: center;
  justify-content: space-between;
  height: 30px;
  padding: 0 10px 0 8px;
  background: #fff;
  color: #8a8a8a;
  font-size: 11.4px;
}
.pal-default {
  display: flex;
  align-items: center;
  justify-content: space-between;
  height: 29px;
  padding: 2px 3px 0 2px;
  box-sizing: border-box;
}
.pal-btn {
  display: flex;
  align-items: center;
  justify-content: center;
  width: 28px;
  height: 21px;
  box-sizing: border-box;
  background: #e4e4e4;
  border: 1px solid #b5b5b5;
}
.pal-main {
  display: flex;
  align-items: center;
  height: 25px;
  padding-left: 3px;
  background: #0078d7;
  color: #fff;
  font-weight: 700;
  font-size: 10.7px;
}
.pal-house { margin: 0 9px 0 8px; }
.pal-list {
  display: flex;
  height: 90px;
}
.pal-rows {
  flex: none;
  width: 168px;
  background: #fff;
}
.pal-head {
  display: flex;
  align-items: center;
  gap: 6px;
  height: 21px;
  padding-left: 2px;
  background: #f2f2f2;
  font-weight: 700;
  font-size: 10.7px;
}
.pal-opt {
  display: flex;
  align-items: center;
  gap: 5px;
  height: 20px;
  padding-left: 4px;
  box-sizing: border-box;
  border-bottom: 1px solid #f0f0f0;
}
.pal-scroll { padding: 7px 0 5px; }
.pal-count {
  height: 14px;
  margin-top: 7px;
  padding-left: 2px;
}
.relink {
  display: flex;
  align-items: center;
  justify-content: center;
  gap: 6px;
  width: 178px;
  height: 21px;
  margin: 7px 0 0 3px;
  box-sizing: border-box;
  background: #cbcbcb;
  border: 1px solid #bbb;
  color: #777;
}
.pal-section {
  display: flex;
  align-items: center;
  gap: 9px;
  width: 180px;
  height: 22px;
  margin: 5px 0 0 2px;
  padding-left: 7px;
  box-sizing: border-box;
  background: #d7d7d7;
  border-radius: 3px;
}
.pal-check {
  display: flex;
  align-items: center;
  gap: 3px;
  height: 14px;
  margin-top: 14px;
  padding-left: 2px;
}
.first-check { margin-top: 11px; }
.box {
  display: flex;
  flex: none;
  align-items: center;
  justify-content: center;
  width: 13px;
  height: 13px;
  box-sizing: border-box;
  background: #fff;
  border: 1px solid #444;
}
.pal-slider {
  display: flex;
  align-items: flex-start;
  margin-top: 10px;
  padding-left: 3px;
}
.fade-btn {
  display: flex;
  flex: none;
  align-items: center;
  width: 28px;
  height: 21px;
  padding-left: 4px;
  gap: 3px;
  box-sizing: border-box;
  background: #e8e8e8;
  border: 1px solid #b5b5b5;
}
.fade-sq {
  display: block;
  width: 12px;
  height: 12px;
  background: #bdbdbd;
}
.slider {
  position: relative;
  width: 134px;
  height: 24px;
  margin-left: 10px;
}
.track {
  position: absolute;
  left: 0;
  right: 0;
  top: 6px;
  height: 3px;
  background: #e4e4e4;
  border: 1px solid #ddd;
  box-sizing: border-box;
}
.knob {
  position: absolute;
  left: 63px;
  top: 1px;
}
.ticks {
  position: absolute;
  left: 4px;
  right: 4px;
  top: 18px;
  display: flex;
  justify-content: space-between;
}
.tick {
  display: block;
  width: 1px;
  height: 3px;
  background: #aaa;
}
.alpha {
  font: 10px "Open Sans", sans-serif;
  fill: #aaa;
}
</style>
